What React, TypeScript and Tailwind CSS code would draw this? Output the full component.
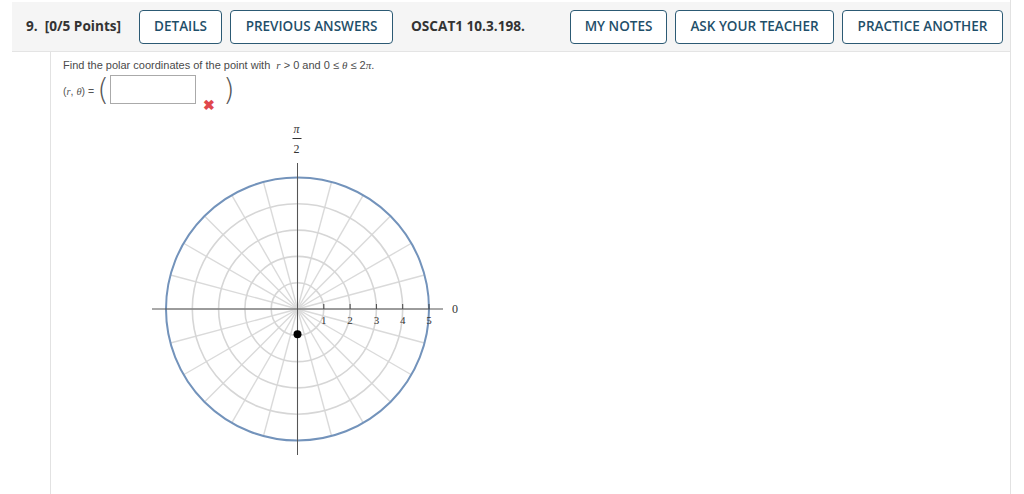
import React from "react";

const btn =
  "h-[34px] flex items-center justify-center rounded-[4px] border-[1.5px] border-[#2c5a74] bg-white text-[#1f4f6a] text-[13.5px] font-semibold leading-none whitespace-nowrap";

function PolarGraph() {
  const cx = 157.5;
  const cy = 192;
  const u = 26.3;
  const R = 5 * u;
  const rays = Array.from({ length: 24 }, (_, i) => (i * Math.PI) / 12);
  return (
    <svg width={330} height={345} viewBox="0 0 330 345" className="block">
      {rays.map((a, i) => (
        <line
          key={i}
          x1={cx}
          y1={cy}
          x2={cx + R * Math.cos(a)}
          y2={cy - R * Math.sin(a)}
          stroke="#dadada"
          strokeWidth={1.4}
        />
      ))}
      {[1, 2, 3, 4].map((k) => (
        <circle key={k} cx={cx} cy={cy} r={k * u} fill="none" stroke="#d6d6d6" strokeWidth={1.6} />
      ))}
      <circle cx={cx} cy={cy} r={R} fill="none" stroke="#7393bb" strokeWidth={2} />
      <line x1={12} y1={cy} x2={303} y2={cy} stroke="#555" strokeWidth={1} />
      <line x1={cx} y1={46} x2={cx} y2={338} stroke="#555" strokeWidth={1} />
      {[1, 2, 3, 4, 5].map((k) => (
        <g key={k}>
          <line x1={cx + k * u} y1={cy - 5} x2={cx + k * u} y2={cy} stroke="#444" strokeWidth={1} />
          <text
            x={cx + k * u}
            y={cy + 15}
            textAnchor="middle"
            fontFamily="'Liberation Serif', serif"
            fontSize={11}
            fill="#333"
          >
            {k}
          </text>
        </g>
      ))}
      <text x={312} y={cy + 4} fontFamily="'Liberation Serif', serif" fontSize={12} fill="#333">
        0
      </text>
      <text
        x={cx - 1}
        y={16}
        textAnchor="middle"
        fontFamily="'Liberation Serif', serif"
        fontStyle="italic"
        fontSize={12}
        fill="#333"
      >
        π
      </text>
      <line x1={cx - 5} y1={21.5} x2={cx + 4} y2={21.5} stroke="#333" strokeWidth={1} />
      <text
        x={cx - 1}
        y={36}
        textAnchor="middle"
        fontFamily="'Liberation Serif', serif"
        fontSize={12}
        fill="#333"
      >
        2
      </text>
      <circle cx={cx} cy={cy + u - 1} r={4} fill="#000" />
    </svg>
  );
}

const serif = { fontFamily: "'Liberation Serif', serif" };

export default function App() {
  return (
    <div className="w-[1024px] h-[494px] bg-white overflow-hidden" style={{ fontFamily: "'Open Sans', sans-serif" }}>
      <div className="ml-[12px] w-[999px] h-[494px] border-r border-[#e2e2e2] flex flex-col">
        <div className="mt-[2px] h-[50px] bg-[#f5f5f5] border-b border-[#e4e4e4] flex items-center pl-[14px] pr-[7px] shrink-0">
          <span className="text-[13.6px] font-bold text-[#333]">9.</span>
          <span className="ml-[7px] text-[13.6px] font-bold text-[#333]">[0/5 Points]</span>
          <div className="ml-[18px] flex gap-[8px]">
            <div className={`${btn} w-[83px]`}>DETAILS</div>
            <div className={`${btn} w-[163px]`}>PREVIOUS ANSWERS</div>
          </div>
          <span className="ml-[18px] text-[13.6px] font-bold text-[#333]">OSCAT1 10.3.198.</span>
          <div className="ml-auto flex gap-[8px]">
            <div className={`${btn} w-[97px]`}>MY NOTES</div>
            <div className={`${btn} w-[159px]`}>ASK YOUR TEACHER</div>
            <div className={`${btn} w-[161px]`}>PRACTICE ANOTHER</div>
          </div>
        </div>
        <div className="ml-[38px] flex-1 border-l border-[#e2e2e2] pl-[12px] pt-[6px]" style={{ fontFamily: "'Liberation Sans', Arial, sans-serif" }}>
          <div className="text-[11px] text-[#4a4a4a] leading-[14px]">
            Find the polar coordinates of the point with <i className="ml-[3px]" style={serif}>r</i> &gt; 0 and 0 ≤ <i style={serif}>θ</i> ≤ 2<i style={serif}>π</i>.
          </div>
          <div className="mt-[3px] flex items-start">
            <span className="mt-[9px] text-[10.5px] text-[#555]">
              (<i style={serif}>r</i>, <i style={serif}>θ</i>) =
            </span>
            <span className="ml-[3px] text-[30px] leading-[30px] text-[#555]" style={{ fontFamily: "'DejaVu Sans', sans-serif", fontWeight: 200 }}>(</span>
            <div className="ml-[1px] w-[86px] h-[29px] border border-[#aaa] bg-white" />
            <span className="ml-[7px] mt-[23px] text-[#e0474c] text-[14px] font-bold leading-none">✖</span>
            <span className="ml-[8px] text-[30px] leading-[30px] text-[#555]" style={{ fontFamily: "'DejaVu Sans', sans-serif", fontWeight: 200 }}>)</span>
          </div>
          <div className="ml-[77px] mt-[5px]">
            <PolarGraph />
          </div>
        </div>
      </div>
    </div>
  );
}
